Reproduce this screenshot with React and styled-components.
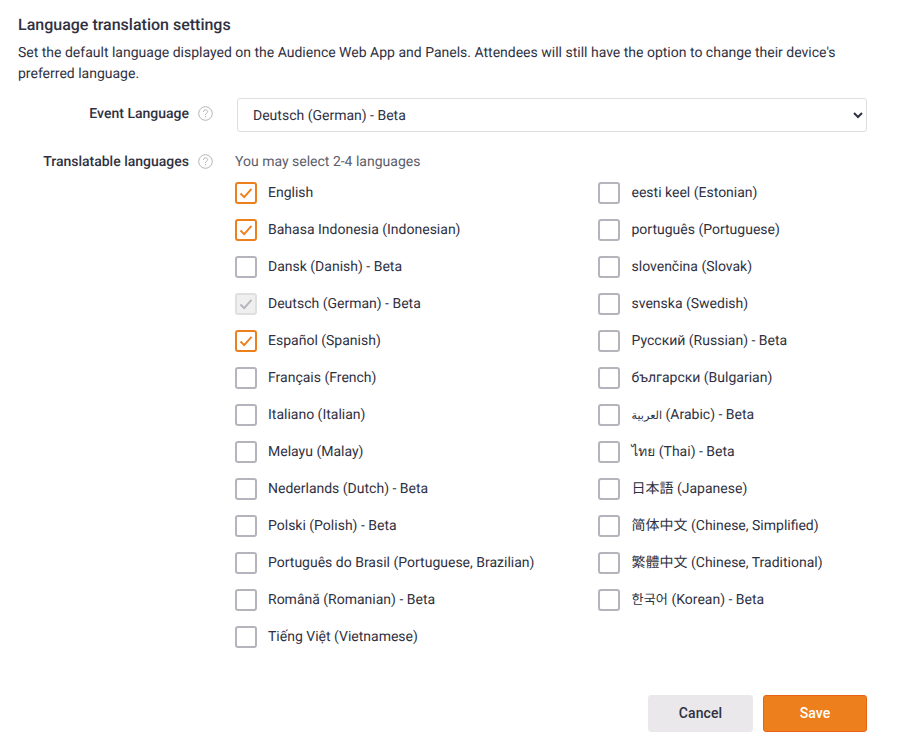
import React, { useState } from 'react'
import styled, { createGlobalStyle } from 'styled-components'

const GlobalStyle = createGlobalStyle`
  * {
    box-sizing: border-box;
  }
  body {
    margin: 0;
    background-color: #fff;
    color: #2f3142;
    font-family: Roboto, 'Noto Sans', 'Noto Sans CJK JP', sans-serif;
    font-size: 14px;
    line-height: 21px;
    text-rendering: geometricPrecision;
  }
`

const Container = styled.div`
  width: 867px;
  padding: 13px 0 15px 18px;
`

const Title = styled.h2`
  margin: 0;
  font-size: 16px;
  font-weight: 500;
  line-height: 24px;
`

const Description = styled.p`
  margin: 6px 0 0;
`

const Field = styled.div`
  display: flex;
  align-items: flex-start;
  margin-top: ${(props) => props.$top};
`

const FieldLabel = styled.div`
  width: 195px;
  margin-right: ${(props) => props.$gap};
  padding-top: ${(props) => props.$offset || '0'};
  display: flex;
  align-items: flex-start;
  justify-content: flex-end;
  gap: 9px;
  font-weight: 500;
  & > svg {
    margin-top: 2px;
  }
`

const Select = styled.select`
  flex: 1;
  height: 34px;
  padding: 2px 0 0 11px;
  border: 1px solid #dedee0;
  border-radius: 3px;
  background-color: #fff;
  color: #2f3142;
  font: inherit;
  text-rendering: inherit;
`

const Options = styled.div`
  flex: 1;
`

const Hint = styled.div`
  color: #5b5d6b;
`

const Columns = styled.div`
  display: grid;
  grid-template-columns: 363px 1fr;
  margin-top: 9px;
`

const Column = styled.div`
  --gap: ${(props) => props.$gap};
`

const Option = styled.label`
  height: 22px;
  margin-bottom: 15px;
  display: flex;
  align-items: center;
  gap: var(--gap);
  cursor: ${(props) => (props.$disabled ? 'default' : 'pointer')};
`

const Box = styled.span`
  width: 22px;
  height: 22px;
  flex-shrink: 0;
  display: flex;
  align-items: center;
  justify-content: center;
  border: 2px solid ${(props) => (props.$disabled ? '#dfdfe0' : props.$checked ? '#ed801c' : '#b5b4bc')};
  border-radius: 3px;
  background-color: ${(props) => (props.$disabled ? '#efefef' : '#fff')};
  color: ${(props) => (props.$disabled ? '#b5b4bc' : '#ed801c')};
`

const Input = styled.input`
  display: none;
`

const Text = styled.span`
  height: 21px;
`

const Native = styled.span`
  font-size: ${(props) => props.$size};
  line-height: 1;
`

const Footer = styled.div`
  display: flex;
  justify-content: flex-end;
  gap: 10px;
  margin-top: 32px;
`

const Button = styled.button`
  width: ${(props) => (props.$primary ? '104px' : '105px')};
  height: 37px;
  padding: 0;
  border: 1px solid ${(props) => (props.$primary ? '#ea6314' : '#eae8eb')};
  border-radius: 3px;
  background-color: ${(props) => (props.$primary ? '#ed801c' : '#eae8eb')};
  color: ${(props) => (props.$primary ? '#fff' : '#2f3142')};
  font: inherit;
  font-weight: 500;
  letter-spacing: 0.1px;
`

const left = [
  'English',
  'Bahasa Indonesia (Indonesian)',
  'Dansk (Danish) - Beta',
  'Deutsch (German) - Beta',
  'Español (Spanish)',
  'Français (French)',
  'Italiano (Italian)',
  'Melayu (Malay)',
  'Nederlands (Dutch) - Beta',
  'Polski (Polish) - Beta',
  'Português do Brasil (Portuguese, Brazilian)',
  'Română (Romanian) - Beta',
  'Tiếng Việt (Vietnamese)',
]

const right = [
  'eesti keel (Estonian)',
  'português (Portuguese)',
  'slovenčina (Slovak)',
  'svenska (Swedish)',
  'Русский (Russian) - Beta',
  'български (Bulgarian)',
  'العربية (Arabic) - Beta',
  'ไทย (Thai) - Beta',
  '日本語 (Japanese)',
  '简体中文 (Chinese, Simplified)',
  '繁體中文 (Chinese, Traditional)',
  '한국어 (Korean) - Beta',
]

const eventLanguage = 'Deutsch (German) - Beta'

// scripts whose glyphs run wide next to the latin text
const nativeSizes = {
  العربية: '11.2px',
  ไทย: '13.6px',
  한국어: '13.2px',
}

const HelpIcon = () => (
  <svg width="15" height="15" viewBox="0 0 15 15" fill="none" stroke="#b5b4bc">
    <circle cx="7.5" cy="7.5" r="6.8" />
    <path d="M5.4 5.9c0-1.3.9-2 2.1-2s2.1.7 2.1 1.8c0 1.6-2.1 1.6-2.1 3.3" />
    <path d="M7.5 10v1.2" />
  </svg>
)

const CheckIcon = () => (
  <svg width="14" height="14" viewBox="0 0 14 14" fill="none" stroke="currentColor" strokeWidth="1.9">
    <path d="M1.5 7.5l3.7 3.7 7.3-8.4" />
  </svg>
)

const LanguageName = ({ name }) => {
  const [native, ...rest] = name.split(' ')
  if (!nativeSizes[native]) return <Text>{name}</Text>
  return (
    <Text>
      <Native $size={nativeSizes[native]}>{native}</Native> {rest.join(' ')}
    </Text>
  )
}

const App = () => {
  const [selected, setSelected] = useState([
    'English',
    'Bahasa Indonesia (Indonesian)',
    eventLanguage,
    'Español (Spanish)',
  ])

  const toggle = (name) => {
    setSelected((prev) => (prev.includes(name) ? prev.filter((n) => n !== name) : [...prev, name]))
  }

  return (
    <>
      <GlobalStyle />
      <Container>
        <Title>Language translation settings</Title>
        <Description>
          Set the default language displayed on the Audience Web App and Panels. Attendees will still have the option to
          change their device's preferred language.
        </Description>
        <Field $top="13px">
          <FieldLabel $gap="24px" $offset="6px">
            Event Language
            <HelpIcon />
          </FieldLabel>
          <Select defaultValue={eventLanguage}>
            {[...left, ...right].map((name) => (
              <option key={name}>{name}</option>
            ))}
          </Select>
        </Field>
        <Field $top="20px">
          <FieldLabel $gap="22px">
            Translatable languages
            <HelpIcon />
          </FieldLabel>
          <Options>
            <Hint>You may select 2-4 languages</Hint>
            <Columns>
              {[left, right].map((column, i) => (
                <Column key={column[0]} $gap={i ? '11.5px' : '11px'}>
                  {column.map((name) => {
                    const disabled = name === eventLanguage
                    const checked = selected.includes(name)
                    return (
                      <Option key={name} $disabled={disabled}>
                        <Input type="checkbox" checked={checked} disabled={disabled} onChange={() => toggle(name)} />
                        <Box $checked={checked} $disabled={disabled}>
                          {checked && <CheckIcon />}
                        </Box>
                        <LanguageName name={name} />
                      </Option>
                    )
                  })}
                </Column>
              ))}
            </Columns>
          </Options>
        </Field>
        <Footer>
          <Button>Cancel</Button>
          <Button $primary>Save</Button>
        </Footer>
      </Container>
    </>
  )
}

export default App
